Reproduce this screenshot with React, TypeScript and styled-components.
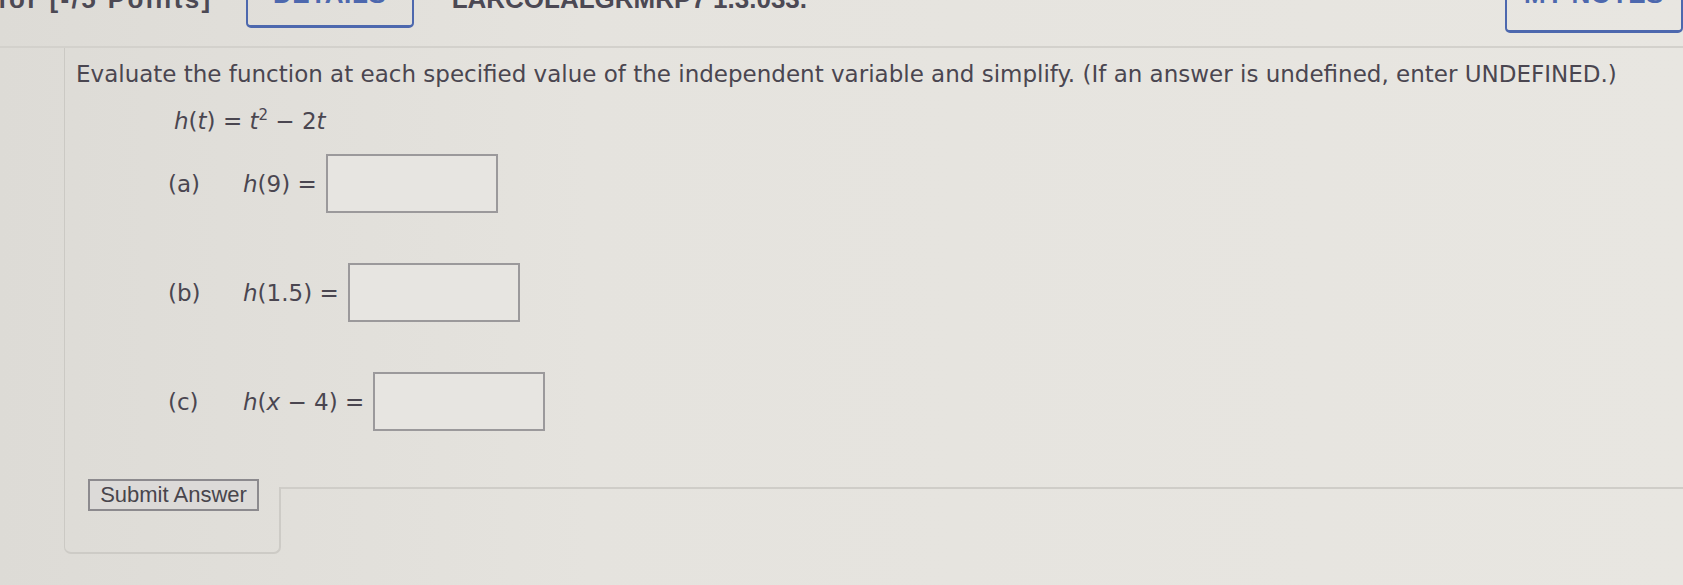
import styled, { createGlobalStyle } from "styled-components";

const GlobalStyle = createGlobalStyle`
  html, body {
    margin: 0;
    padding: 0;
    background: #e4e2dd;
    overflow: hidden;
  }
  body {
    width: 1683px;
    height: 585px;
    background: linear-gradient(90deg, #dddbd6 0%, #e5e3de 35%, #e8e6e1 100%);
    font-family: "DejaVu Sans", Verdana, sans-serif;
    color: #4a4650;
  }
`;

const TopBar = styled.div`
  height: 48px;
  border-bottom: 2px solid #d3d1cc;
  box-sizing: border-box;
  overflow: hidden;
`;

const TopRow = styled.div`
  display: flex;
  align-items: flex-start;
  margin-top: -30px;
  height: 78px;
`;

const HeaderText = styled.span<{ $left: number; $spacing?: number }>`
  margin-left: ${(p) => p.$left}px;
  margin-top: 17px;
  font-family: "Liberation Sans", Arial, sans-serif;
  font-weight: 700;
  font-size: 26px;
  line-height: 25px;
  color: #4c4954;
  letter-spacing: ${(p) => p.$spacing ?? 0}px;
  white-space: nowrap;
`;

const HeaderButton = styled.div<{ $left: number; $width: number; $height: number }>`
  margin-left: ${(p) => p.$left}px;
  width: ${(p) => p.$width}px;
  height: ${(p) => p.$height}px;
  flex-shrink: 0;
  box-sizing: border-box;
  border: 2px solid #4d68ae;
  border-bottom-width: 3px;
  border-radius: 5px;
  display: flex;
  justify-content: center;
  font-family: "Liberation Sans", Arial, sans-serif;
  font-weight: 700;
  font-size: 26px;
  line-height: 25px;
  color: #4d68ae;
  padding-top: 10px;
  letter-spacing: 0.6px;
  white-space: nowrap;
`;

const Spacer = styled.div`
  flex: 1;
`;

const Panel = styled.div`
  margin-left: 64px;
  border-left: 1px solid #cbc9c4;
  padding: 12px 0 56px 11px;
`;

const Prompt = styled.p`
  margin: 0;
  font-size: 23px;
  line-height: 28px;
  white-space: nowrap;
`;

const Formula = styled.div`
  margin: 19px 0 0 98px;
  font-size: 23px;
  line-height: 28px;
`;

const Var = styled.i`
  font-style: italic;
`;

const Sup = styled.sup`
  font-size: 15px;
  vertical-align: 9px;
  line-height: 0;
`;

const PartList = styled.div`
  margin: 19px 0 0 92px;
  display: flex;
  flex-direction: column;
  gap: 50px;
`;

const PartRow = styled.div`
  display: flex;
  align-items: center;
  height: 59px;
  font-size: 23px;
`;

const PartLabel = styled.span`
  width: 75px;
  flex-shrink: 0;
`;

const Expr = styled.span`
  margin-right: 9px;
  white-space: nowrap;
`;

const AnswerBox = styled.div`
  width: 172px;
  height: 59px;
  box-sizing: border-box;
  border: 2px solid #9b999b;
  background: #e7e5e1;
`;

const FooterRow = styled.div`
  display: flex;
  align-items: flex-start;
  margin-left: 64px;
`;

const SubmitTab = styled.div`
  width: 217px;
  height: 67px;
  box-sizing: border-box;
  border-left: 1px solid #cbc9c4;
  border-right: 2px solid #cdcbc6;
  border-bottom: 2px solid #cdcbc6;
  border-radius: 0 0 7px 7px;
  padding-left: 23px;
`;

const SubmitButton = styled.button`
  margin-top: -9px;
  width: 171px;
  height: 32px;
  box-sizing: border-box;
  border: 2px solid #8c8a8e;
  background: #dcdad8;
  font-family: "Liberation Sans", Arial, sans-serif;
  font-size: 22px;
  line-height: 26px;
  color: #48454c;
  padding: 0;
`;

const Filler = styled.div`
  flex: 1;
  border-top: 2px solid #cfcdc8;
`;

const parts = [
  { label: "(a)", arg: "9" },
  { label: "(b)", arg: "1.5" },
  { label: "(c)", arg: "x" },
];

export default function App() {
  return (
    <>
      <GlobalStyle />
      <TopBar>
        <TopRow>
          <HeaderText $left={-2} $spacing={2.4}>
            for [-/5 Points]
          </HeaderText>
          <HeaderButton $left={33} $width={168} $height={58}>
            DETAILS
          </HeaderButton>
          <HeaderText $left={38}>LARCOLALGRMRP7 1.3.033.</HeaderText>
          <Spacer />
          <HeaderButton $left={0} $width={178} $height={63}>
            MY NOTES
          </HeaderButton>
        </TopRow>
      </TopBar>
      <Panel>
        <Prompt>
          Evaluate the function at each specified value of the independent
          variable and simplify. (If an answer is undefined, enter UNDEFINED.)
        </Prompt>
        <Formula>
          <Var>h</Var>(<Var>t</Var>) = <Var>t</Var>
          <Sup>2</Sup> − 2<Var>t</Var>
        </Formula>
        <PartList>
          {parts.map((p) => (
            <PartRow key={p.label}>
              <PartLabel>{p.label}</PartLabel>
              <Expr>
                <Var>h</Var>(
                {p.arg === "x" ? (
                  <>
                    <Var>x</Var> − 4
                  </>
                ) : (
                  p.arg
                )}
                ) =
              </Expr>
              <AnswerBox />
            </PartRow>
          ))}
        </PartList>
      </Panel>
      <FooterRow>
        <SubmitTab>
          <SubmitButton>Submit Answer</SubmitButton>
        </SubmitTab>
        <Filler />
      </FooterRow>
    </>
  );
}
